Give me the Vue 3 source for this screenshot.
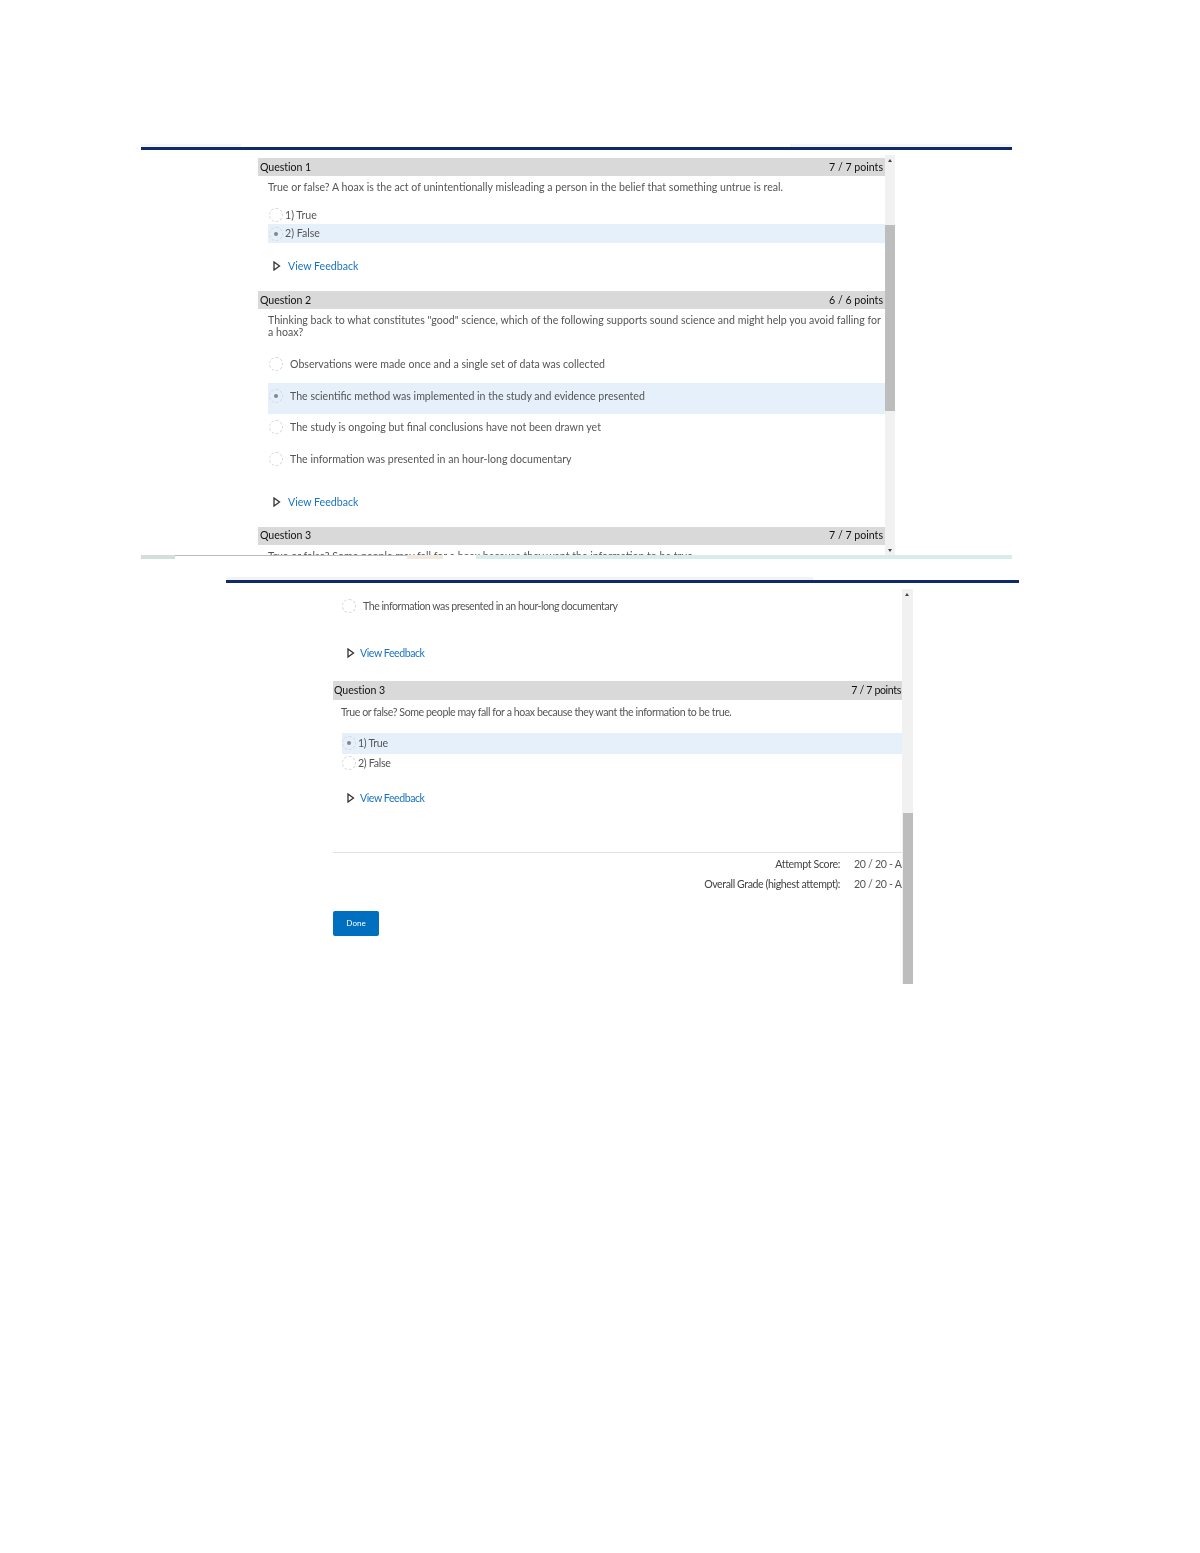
<script setup>
const firstOptions = [
  { id: 'a', text: '1) True', selected: false },
  { id: 'b', text: '2) False', selected: true }
]
const secondOptions = [
  { id: 'a', text: 'Observations were made once and a single set of data was collected', selected: false },
  { id: 'b', text: 'The scientific method was implemented in the study and evidence presented', selected: true },
  { id: 'c', text: 'The study is ongoing but final conclusions have not been drawn yet', selected: false },
  { id: 'd', text: 'The information was presented in an hour-long documentary', selected: false }
]
const thirdOptions = [
  { id: 'a', text: '1) True', selected: true },
  { id: 'b', text: '2) False', selected: false }
]
</script>

<template>
  <div class="page">
    <section class="sheet sheet-one">
      <div class="shade-one"><span class="left"></span><span class="right"></span></div>
      <div class="rule"></div>
      <div class="frame frame-one">
        <div class="content content-one">
          <div class="q-head"><strong>Question 1</strong><span>7 / 7 points</span></div>
          <p class="q-text">True or false? A hoax is the act of unintentionally misleading a person in the belief that something untrue is real.</p>
          <div class="options short first-gap">
            <div v-for="o in firstOptions" :key="o.id" class="option" :class="{ selected: o.selected }">
              <span class="radio"></span><span class="label">{{ o.text }}</span>
            </div>
          </div>
          <a class="feedback gap-16 raised">
            <svg width="8" height="10" viewBox="0 0 8 10"><path d="M1 1l5.5 4L1 9z" fill="none" stroke="#333" stroke-width="1.3" /></svg>
            <span>View Feedback</span>
          </a>

          <div class="q-head q-next"><strong>Question 2</strong><span>6 / 6 points</span></div>
          <p class="q-text">Thinking back to what constitutes "good" science, which of the following supports sound science and might help you avoid falling for a hoax?</p>
          <div class="options tall tall-gap">
            <div v-for="o in secondOptions" :key="o.id" class="option" :class="{ selected: o.selected }">
              <span class="radio"></span><span class="label">{{ o.text }}</span>
            </div>
          </div>
          <a class="feedback gap-17">
            <svg width="8" height="10" viewBox="0 0 8 10"><path d="M1 1l5.5 4L1 9z" fill="none" stroke="#333" stroke-width="1.3" /></svg>
            <span>View Feedback</span>
          </a>

          <div class="q-head q-next"><strong>Question 3</strong><span>7 / 7 points</span></div>
          <p class="q-text">True or false? Some people may fall for a hoax because they want the information to be true.</p>
        </div>
        <div class="scrollbar bar-one">
          <i class="arrow up"></i>
          <b class="thumb thumb-one"></b>
          <i class="arrow down"></i>
        </div>
      </div>
      <div class="strip">
        <span class="s-a"></span><span class="s-b"></span><span class="s-c"></span><span class="s-d"></span><span class="s-e"></span>
      </div>
    </section>

    <section class="sheet sheet-two">
      <div class="shade"></div>
      <div class="rule"></div>
      <div class="frame frame-two">
        <div class="content content-two">
          <div class="options tall single">
            <div class="option">
              <span class="radio"></span><span class="label">The information was presented in an hour-long documentary</span>
            </div>
          </div>
          <a class="feedback gap-21">
            <svg width="8" height="10" viewBox="0 0 8 10"><path d="M1 1l5.5 4L1 9z" fill="none" stroke="#333" stroke-width="1.3" /></svg>
            <span>View Feedback</span>
          </a>

          <div class="q-head q-three"><strong>Question 3</strong><span>7 / 7 points</span></div>
          <p class="q-text">True or false? Some people may fall for a hoax because they want the information to be true.</p>
          <div class="options third">
            <div v-for="o in thirdOptions" :key="o.id" class="option" :class="{ selected: o.selected }">
              <span class="radio"></span><span class="label">{{ o.text }}</span>
            </div>
          </div>
          <a class="feedback gap-18">
            <svg width="8" height="10" viewBox="0 0 8 10"><path d="M1 1l5.5 4L1 9z" fill="none" stroke="#333" stroke-width="1.3" /></svg>
            <span>View Feedback</span>
          </a>

          <hr class="divider" />
          <div class="scores">
            <span class="s-one">Attempt Score:</span><span class="val">20 / 20 - A</span>
            <span class="s-two">Overall Grade (highest attempt):</span><span class="val">20 / 20 - A</span>
          </div>
          <button class="done" type="button">Done</button>
        </div>
        <div class="scrollbar bar-two">
          <i class="arrow up"></i>
          <b class="thumb thumb-two"></b>
        </div>
      </div>
    </section>
  </div>
</template>

<style scoped>
.page {
  width: 1200px;
  height: 1553px;
  overflow: hidden;
  padding-top: 144px;
  box-sizing: border-box;
  background: #fff;
  font-family: Lato, "Liberation Sans", sans-serif;
  font-size: 10.6px;
  color: #555;
  filter: blur(0.45px);
}
.sheet-one { margin-left: 141px; width: 871px; }
.sheet-two { margin-left: 226px; width: 793px; margin-top: 18px; }
.shade-one { display: flex; justify-content: space-between; height: 3px; }
.shade-one span { display: block; background: #f5f5f5; }
.shade-one .left { width: 100px; }
.shade-one .right { width: 222px; }
.shade { height: 3px; width: 587px; background: #f3f3f3; }
.rule { height: 3px; background: #0f2a6b; }
.frame { display: flex; align-items: flex-start; }
.frame-one { height: 405px; overflow: hidden; padding-left: 117px; }
.frame-two { height: 401px; padding-left: 107px; }
.content { flex: none; }
.content-one { width: 627px; padding-top: 8px; }
.content-two { width: 569px; padding-top: 10px; }
.q-head {
  display: flex;
  justify-content: space-between;
  align-items: center;
  height: 17px;
  padding: 0 2px 1px;
  background: #d9d9d9;
  color: #111;
  font-size: 10.6px;
}
.q-head strong { font-weight: 400; letter-spacing: -0.05px; }
.q-next { margin-top: 18px; }
.q-three {
  margin-top: 21px;
  height: 18px;
  padding-right: 1px;
  padding-left: 1px;
  letter-spacing: -0.35px;
}
.q-text {
  margin: 5px 0 0 10px;
  line-height: 12px;
}
.content-two .q-text { margin: 6px 0 0 8px; letter-spacing: -0.4px; }
.options { margin-left: 10px; }
.first-gap { margin-top: 12px; }
.tall-gap { margin-top: 13px; }
.option { display: flex; align-items: center; }
.short .option { height: 19px; gap: 2px; padding-left: 1px; }
.short .selected .label, .third .label { padding-bottom: 1px; }
.tall .option { height: 31.7px; gap: 7px; padding: 0 0 6px 1px; box-sizing: border-box; }
.selected { background: #e6f0fa; }
.radio {
  flex: none;
  width: 12px;
  height: 12px;
  border: 1px dashed #d8d8d8;
  border-radius: 50%;
  position: relative;
}
.selected .radio::after {
  content: "";
  position: absolute;
  top: 4px;
  left: 4px;
  width: 4px;
  height: 4px;
  border-radius: 50%;
  background: #7d8894;
}
.single { margin-left: 8px; }
.single .option { gap: 7px; letter-spacing: -0.47px; }
.third { margin: 15px 0 0 9px; }
.third .option { height: 19px; gap: 2px; letter-spacing: -0.3px; }
.third .option.selected { height: 21px; }
.feedback {
  display: flex;
  align-items: center;
  gap: 7px;
  height: 14px;
  margin-left: 15px;
  color: #1a73c0;
}
.raised span { padding-bottom: 1px; }
.gap-16 { margin-top: 16px; }
.gap-17 { margin-top: 17px; }
.gap-18 { margin-top: 18px; }
.gap-21 { margin-top: 21px; }
.content-two .feedback { margin-left: 14px; gap: 5px; letter-spacing: -0.45px; }
.divider { height: 1px; margin: 47px 0 0; border: 0; background: #dfe3e8; }
.scores {
  display: grid;
  grid-template-columns: 507px 48px;
  column-gap: 14px;
  row-gap: 8px;
  margin-top: 5px;
  line-height: 12px;
  text-align: right;
  white-space: nowrap;
}
.s-one { letter-spacing: -0.35px; color: #444; }
.s-two { letter-spacing: -0.4px; color: #444; }
.val { padding-right: 1px; letter-spacing: -0.3px; margin-right: 1px; }
.done {
  display: block;
  width: 46px;
  height: 25px;
  margin-top: 21px;
  padding: 0;
  border: 0;
  border-radius: 2px;
  background: #006fbf;
  color: #fff;
  font: 8px Lato, "Liberation Sans", sans-serif;
}
.scrollbar {
  flex: none;
  position: relative;
  background: #f1f1f1;
}
.bar-one { width: 10px; height: 400px; margin-top: 5px; }
.bar-two { width: 11px; height: 395px; margin-top: 6px; }
.thumb { display: block; background: #bdbdbd; }
.thumb-one { height: 186px; margin-top: 70px; }
.thumb-two { height: 171px; margin: 224px 0 0 1px; }
.arrow { position: absolute; left: 3px; width: 0; height: 0; border-left: 2.5px solid transparent; border-right: 2.5px solid transparent; }
.arrow.up { top: 4px; border-bottom: 3px solid #444; }
.arrow.down { bottom: 3px; border-top: 3px solid #444; }
.strip { display: flex; height: 4px; }
.strip span { display: block; height: 4px; }
.s-a { width: 34px; background: #d3dedb; }
.s-b { width: 232px; height: 1px !important; background: #bbb; }
.s-c { width: 36px; background: #f1e9df; }
.s-d { width: 33px; }
.s-e { flex: 1; background: #d8ecec; }
</style>
